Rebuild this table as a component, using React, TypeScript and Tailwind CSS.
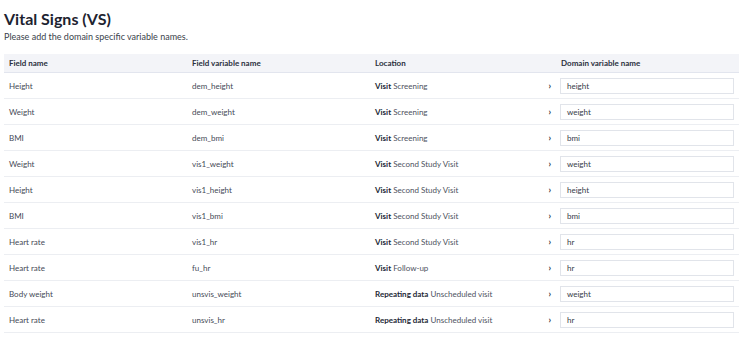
const rows = [
  { field: "Height", variable: "dem_height", kind: "Visit", place: "Screening", domain: "height" },
  { field: "Weight", variable: "dem_weight", kind: "Visit", place: "Screening", domain: "weight" },
  { field: "BMI", variable: "dem_bmi", kind: "Visit", place: "Screening", domain: "bmi" },
  { field: "Weight", variable: "vis1_weight", kind: "Visit", place: "Second Study Visit", domain: "weight" },
  { field: "Height", variable: "vis1_height", kind: "Visit", place: "Second Study Visit", domain: "height" },
  { field: "BMI", variable: "vis1_bmi", kind: "Visit", place: "Second Study Visit", domain: "bmi" },
  { field: "Heart rate", variable: "vis1_hr", kind: "Visit", place: "Second Study Visit", domain: "hr" },
  { field: "Heart rate", variable: "fu_hr", kind: "Visit", place: "Follow-up", domain: "hr" },
  { field: "Body weight", variable: "unsvis_weight", kind: "Repeating data", place: "Unscheduled visit", domain: "weight" },
  { field: "Heart rate", variable: "unsvis_hr", kind: "Repeating data", place: "Unscheduled visit", domain: "hr" },
];

const cols = "grid grid-cols-[183px_183px_186px_183px]";

export default function App() {
  return (
    <div className="w-[753px] h-[338px] bg-white px-[4px] pt-[9px] font-['Lato',sans-serif] text-[#3f4450] overflow-hidden">
      <h1 className="text-[16px] font-bold leading-[19px] text-[#1d2330]">Vital Signs (VS)</h1>
      <p className="text-[9px] leading-[12px] mt-[3px] text-[#3a3f4b]">Please add the domain specific variable names.</p>

      <div className="mt-[11px] w-[735px]">
        <div className={`${cols} h-[19px] items-center bg-[#f3f4f8] border-b border-[#e2e5ee] text-[8px] font-bold text-[#2a2f3c]`}>
          <div className="pl-[5px]">Field name</div>
          <div className="pl-[5px]">Field variable name</div>
          <div className="pl-[5px]">Location</div>
          <div className="pl-[5px]">Domain variable name</div>
        </div>

        {rows.map((r, i) => (
          <div key={i} className={`${cols} h-[26px] items-center border-b border-[#eceef2] text-[8px] text-[#454a56]`}>
            <div className="pl-[5px]">{r.field}</div>
            <div className="pl-[5px]">{r.variable}</div>
            <div className="pl-[5px] flex items-center justify-between pr-[5px]">
              <span>
                <span className="font-bold text-[#232836]">{r.kind}</span>{" "}
                <span className="text-[8px] text-[#4d525e]">{r.place}</span>
              </span>
              <span className="text-[9px] font-bold text-[#2e3340] leading-none">›</span>
            </div>
            <div className="pl-[4px] pr-[5px]">
              <div className="h-[16px] border border-[#e1e4ea] bg-white pl-[6px] flex items-center text-[8px] text-[#363b47]">
                {r.domain}
              </div>
            </div>
          </div>
        ))}
      </div>
    </div>
  );
}
